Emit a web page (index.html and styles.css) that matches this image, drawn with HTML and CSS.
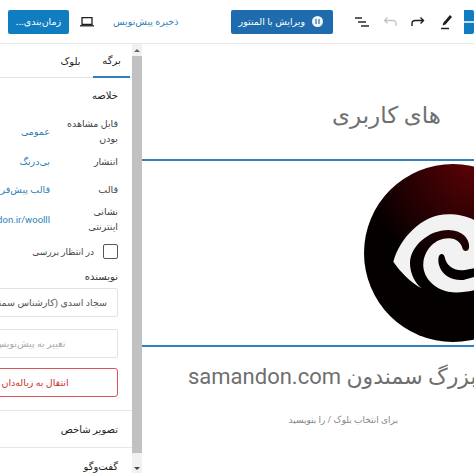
FILE: index.html
```html
<!DOCTYPE html>
<html lang="fa" dir="rtl">
<head>
<meta charset="utf-8">
<title>ویرایش برگه</title>
<link rel="stylesheet" href="styles.css">
</head>
<body>
<div class="app">
  <header class="topbar">
    <div class="tools">
      <span class="add-btn"><svg width="10" height="10" viewBox="0 0 10 10"><path d="M0 5h10" stroke="#fff" stroke-width="1.5"/></svg></span>
      <svg class="ico" width="14" height="16" viewBox="0 0 14 16"><path d="M11 1l2 2-6.500 7.500-3 1 1-3z" fill="#1e1e1e"/><path d="M2 14.500h8" stroke="#1e1e1e" stroke-width="1.500"/></svg>
      <svg class="ico" width="14" height="12" viewBox="0 0 14 12"><path d="M1 10V7.500Q1 4.500 4.500 4.500H12.500M9.500 1.500l3 3-3 3" fill="none" stroke="#1e1e1e" stroke-width="1.400"/></svg>
      <svg class="ico" width="14" height="12" viewBox="0 0 14 12"><path d="M13 10V7.500Q13 4.500 9.500 4.500H1.500M4.500 1.500l-3 3 3 3" fill="none" stroke="#c4c4c4" stroke-width="1.300"/></svg>
      <svg class="ico" width="14" height="12" viewBox="0 0 14 12"><path d="M0 2h7M3 6h8M6 10h8" fill="none" stroke="#2a2a2a" stroke-width="1.500"/></svg>
      <span class="elementor-btn">
        <span class="el-badge"><i></i><i></i></span>
        <span>ویرایش با المنتور</span>
      </span>
    </div>
    <div class="actions">
      <a class="draft">ذخیره پیش‌نویس</a>
      <svg class="laptop" width="14" height="10" viewBox="0 0 14 10"><path d="M2 .7h10v6.800H2z" fill="none" stroke="#1e1e1e" stroke-width="1.300"/><path d="M0 8.800h14" stroke="#1e1e1e" stroke-width="1.300"/></svg>
      <span class="schedule">زمان‌بندی...</span>
    </div>
  </header>
  <div class="workspace">
    <main class="canvas">
      <h1 class="page-title">های کاربری</h1>
      <figure class="figure">
        <svg class="logo" width="178" height="178" viewBox="-63 -123 534 534">
          <defs><radialGradient id="g" cx="0.62" cy="0" r="0.62"><stop offset="0" stop-color="#5c0206"/><stop offset="1" stop-color="#050000"/></radialGradient></defs>
          <circle cx="204" cy="144" r="267" fill="url(#g)"/>
          <path d="M25 170C45 100 110 28 190 28C230 28 267 40 290 60L290 250C250 262 215 265 190 260C140 250 112 210 115 175C118 135 150 100 190 100C215 100 228 115 232 128C234 140 250 142 252 128C255 105 235 75 190 75C130 75 75 125 75 175C75 205 90 235 110 250C80 235 45 200 25 170Z" fill="#f2f2f2"/>
          <path d="M170 147C160 147 158 165 162 180C170 210 200 228 235 225L290 210L290 185L240 195C205 200 185 180 180 160C178 150 175 147 170 147Z" fill="#050000"/>
        </svg>
      </figure>
      <h2 class="big-heading"><span>طرح برگه بزرگ سمندون samandon.com</span></h2>
      <p class="hint">برای انتخاب بلوک / را بنویسید</p>
    </main>
    <aside class="sidebar">
      <div class="scrollbar">
        <span class="arrow up"></span>
        <span class="thumb"></span>
        <span class="arrow down"></span>
      </div>
      <div class="panel">
        <div class="panel-inner">
          <nav class="tabs">
            <span class="tab active">برگه</span>
            <span class="tab">بلوک</span>
          </nav>
          <section class="summary">
            <h3 class="sec-title">خلاصه</h3>
            <div class="row row-tall"><span class="lbl">قابل مشاهده بودن</span><a class="val">عمومی</a></div>
            <div class="row"><span class="lbl">انتشار</span><a class="val">بی‌درنگ</a></div>
            <div class="row"><span class="lbl">قالب</span><a class="val">قالب پیش‌فرض پوسته</a></div>
            <div class="row row-tall"><span class="lbl">نشانی اینترنتی</span><a class="val url" dir="rtl">samandon.ir/woolll</a></div>
            <label class="check"><span class="box"></span><span>در انتظار بررسی</span></label>
            <h4 class="author">نویسنده</h4>
            <div class="field">سجاد اسدی (کارشناس سمندون)</div>
            <div class="field muted">تغییر به پیش‌نویس</div>
            <div class="field danger">انتقال به زباله‌دان</div>
          </section>
          <h3 class="fold">تصویر شاخص</h3>
          <h3 class="fold">گفت‌وگو</h3>
        </div>
      </div>
    </aside>
  </div>
</div>
</body>
</html>
```

FILE: styles.css
```css
* { box-sizing: border-box; }
html, body { margin: 0; height: 100%; overflow: hidden; background: #fff; }
body { font-family: Roboto, "Noto Sans", "DejaVu Sans", sans-serif; font-size: 10px; color: #333; }
.app { width: 474px; height: 473px; display: flex; flex-direction: column; overflow: hidden; }

.topbar { height: 44px; flex: none; display: flex; justify-content: space-between; align-items: center; border-bottom: 1px solid #e8e8e8; padding-left: 8px; }
.tools { display: flex; align-items: center; }
.add-btn { width: 10px; height: 24px; background: #0f7dbf; display: flex; align-items: center; justify-content: flex-end; overflow: hidden; border-radius: 0 2px 2px 0; margin-left: 11px; }
.ico { display: block; flex: none; margin-left: 14px; }
.elementor-btn { width: 102px; height: 24px; margin-right: 8px; background: #1e6cae; color: #fff; border-radius: 2px; display: flex; align-items: center; gap: 7px; padding-right: 10px; font-size: 9.500px; font-weight: 500; white-space: nowrap; }
.el-badge { width: 11px; height: 11px; background: #f2f4f7; border-radius: 50%; display: flex; align-items: center; justify-content: center; gap: 1px; flex: none; }
.el-badge i { width: 2px; height: 5px; background: #7da6cc; }
.actions { display: flex; align-items: center; }
.draft { color: #2c7fb8; font-size: 9.500px; margin-left: 19px; white-space: nowrap; }
.laptop { display: block; margin-left: 11px; }
.schedule { width: 61px; height: 24px; background: #0f7dbf; color: #fff; border-radius: 2px; display: flex; align-items: center; justify-content: center; font-size: 9.500px; font-weight: 500; white-space: nowrap; }

.workspace { flex: 1; min-height: 0; display: flex; }
.canvas { width: 332px; flex: none; overflow: hidden; }
.page-title { margin: 0; height: 115px; padding: 52px 33px 0 0; font-size: 23px; line-height: 40px; font-weight: 400; color: #6f6f6f; white-space: nowrap; }
.figure { margin: 0; height: 188px; border-top: 2px solid #2f81c0; border-bottom: 2px solid #2f81c0; padding: 3px 0 0 0; display: flex; justify-content: flex-start; }
.logo { display: block; flex: none; margin-right: -68px; }
.big-heading { margin: 15px 0 0; height: 30px; font-size: 22px; line-height: 30px; font-weight: 400; color: #6f6f6f; white-space: nowrap; direction: ltr; padding-left: 46px; }
.big-heading span { direction: rtl; unicode-bidi: embed; display: inline-block; }
.hint { margin: 21px 76px 0 0; width: 108px; font-size: 9px; line-height: 14px; color: #888; white-space: nowrap; }

.sidebar { width: 142px; flex: none; display: flex; overflow: hidden; }
.scrollbar { width: 10px; flex: none; background: #f1f1f1; display: flex; flex-direction: column; align-items: center; }
.arrow { flex: none; display: flex; }
.arrow.up { height: 12px; align-items: center; }
.arrow.down { height: 20px; align-items: flex-end; padding-bottom: 3px; }
.arrow::before { content: ""; border-left: 3px solid transparent; border-right: 3px solid transparent; }
.arrow.up::before { border-bottom: 3px solid #666; }
.arrow.down::before { border-top: 3px solid #444; }
.thumb { width: 100%; flex: 1; background: #c1c1c1; }
.panel { width: 132px; flex: none; overflow: hidden; }
.panel-inner { width: 190px; }
.tabs { height: 34px; display: flex; border-bottom: 1px solid #e2e2e2; padding-right: 2px; }
.tab { width: 37px; display: flex; align-items: center; justify-content: center; font-size: 10px; font-weight: 500; color: #222; height: 34px; }
.tab + .tab { margin-right: 4px; }
.tab.active { border-bottom: 2px solid #2f7fb8; }
.summary { padding: 11px 14px 13px 0; border-bottom: 1px solid #e6e6e6; }
.sec-title { margin: 0 0 12px; font-size: 10px; line-height: 14px; font-weight: 500; color: #222; }
.row { display: flex; align-items: center; height: 28px; font-size: 9.500px; color: #444; }
.row-tall { height: 32px; margin-bottom: 0; }
.lbl { width: 56px; flex: none; line-height: 15px; }
.val { flex: none; font-size: 9.500px; color: #2c7fb8; white-space: nowrap; margin-right: 12px; }
.url { direction: ltr; unicode-bidi: plaintext; }
.check { display: flex; align-items: center; gap: 9px; margin-top: 9px; font-size: 9px; color: #444; }
.box { width: 15px; height: 15px; border: 1.500px solid #555; border-radius: 2px; flex: none; }
.author { margin: 11px 0 4px; font-size: 10px; line-height: 14px; font-weight: 500; color: #333; }
.field { height: 29px; margin-bottom: 12px; background: #fff; border: 1px solid #e3e3e3; border-radius: 2px; display: flex; align-items: center; padding-right: 10px; font-size: 9.500px; color: #555; white-space: nowrap; }
.muted { margin-bottom: 10px; padding-right: 0; justify-content: center; color: #aaa; }
.danger { margin-bottom: 0; padding-right: 0; padding-left: 10px; justify-content: center; border: 1.500px solid #d9555a; border-radius: 3px; color: #c9302c; font-weight: 500; }
.fold { margin: 0; height: 37px; display: flex; align-items: center; padding-right: 14px; font-size: 10px; font-weight: 500; color: #222; border-bottom: 1px solid #e6e6e6; }
```
